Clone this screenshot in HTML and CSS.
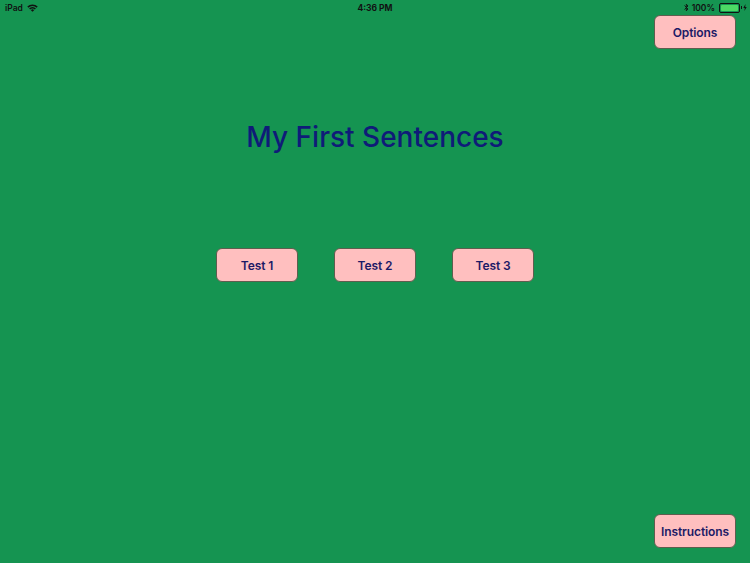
FILE: index.html
```html
<!DOCTYPE html>
<html lang="en">
<head>
    <meta charset="UTF-8">
    <meta name="viewport" content="width=device-width, initial-scale=1.0">
    <title>My First Sentences</title>
    <link rel="stylesheet" href="styles.css">
</head>
<body>
    <div class="screen">
        <div class="status">
            <div class="status-left">
                <span>iPad</span>
                <svg class="wifi" width="11" height="8" viewBox="0 0 11 8">
                    <path d="M0.3 2.6 A7.2 7.2 0 0 1 10.7 2.6 L9.6 3.7 A5.6 5.6 0 0 0 1.4 3.7 Z" fill="#111"/>
                    <path d="M2.1 4.4 A4.6 4.6 0 0 1 8.9 4.4 L7.8 5.5 A3 3 0 0 0 3.2 5.5 Z" fill="#111"/>
                    <path d="M3.9 6.2 A2.2 2.2 0 0 1 7.1 6.2 L5.5 7.8 Z" fill="#111"/>
                </svg>
            </div>
            <div class="status-time">4:36 PM</div>
            <div class="status-right">
                <svg class="bt" width="5" height="9" viewBox="0 0 5 9">
                    <path d="M0.5 2.5 L4 6 L2.3 7.8 L2.3 1.2 L4 3 L0.5 6.5" fill="none" stroke="#111" stroke-width="0.9"/>
                </svg>
                <span>100%</span>
                <div class="battery"><div class="battery-fill"></div></div>
                <svg class="bolt" width="4" height="7" viewBox="0 0 4 7">
                    <path d="M2.5 0 L0.3 4 L1.8 4 L1.4 7 L3.7 3 L2.2 3 Z" fill="#111"/>
                </svg>
            </div>
        </div>

        <div class="top">
            <button class="btn">Options</button>
        </div>

        <h1>My First Sentences</h1>

        <div class="tests">
            <button class="btn">Test 1</button>
            <button class="btn">Test 2</button>
            <button class="btn">Test 3</button>
        </div>

        <div class="bottom">
            <button class="btn">Instructions</button>
        </div>
    </div>
</body>
</html>
```

FILE: styles.css
```css
html, body {
    margin: 0;
    padding: 0;
}
body {
    font-family: Inter, "Liberation Sans", Arial, sans-serif;
    background-color: #159451;
}
.screen {
    height: 563px;
    display: flex;
    flex-direction: column;
}
.status {
    height: 15px;
    display: flex;
    align-items: center;
    justify-content: space-between;
    padding: 0 3px 0 5px;
    font-size: 8.5px;
    font-weight: 600;
    color: #111;
    position: relative;
}
.status-left, .status-right {
    display: flex;
    align-items: center;
    gap: 4px;
}
.status-right {
    gap: 3px;
}
.status-time {
    position: absolute;
    left: 0;
    right: 0;
    text-align: center;
    font-weight: 700;
}
.battery {
    width: 17px;
    height: 6px;
    border: 1px solid #111;
    border-radius: 2px;
    padding: 1px;
    position: relative;
    margin-left: 1px;
}
.battery::after {
    content: "";
    position: absolute;
    right: -3px;
    top: 2px;
    width: 1.5px;
    height: 3px;
    background: #111;
}
.battery-fill {
    width: 100%;
    height: 100%;
    background: #4cd964;
    border-radius: 1px;
}
.top, .bottom {
    display: flex;
    justify-content: flex-end;
    padding: 0 14px;
}
.bottom {
    margin-top: auto;
    padding-bottom: 15px;
}
.btn {
    font-family: Inter, "Liberation Sans", Arial, sans-serif;
    width: 82px;
    height: 34px;
    font-size: 12px;
    font-weight: 600;
    letter-spacing: -0.1px;
    color: #1c1a66;
    background-color: #ffbfbf;
    border: 1px solid #5e5e4e;
    border-radius: 6px;
    padding: 0;
    cursor: pointer;
}
h1 {
    margin: 70px 0 0;
    text-align: center;
    font-size: 28px;
    line-height: 36px;
    font-weight: 500;
    color: #0f1b78;
}
.tests {
    margin-top: 93px;
    display: flex;
    justify-content: center;
    gap: 36px;
}
```
